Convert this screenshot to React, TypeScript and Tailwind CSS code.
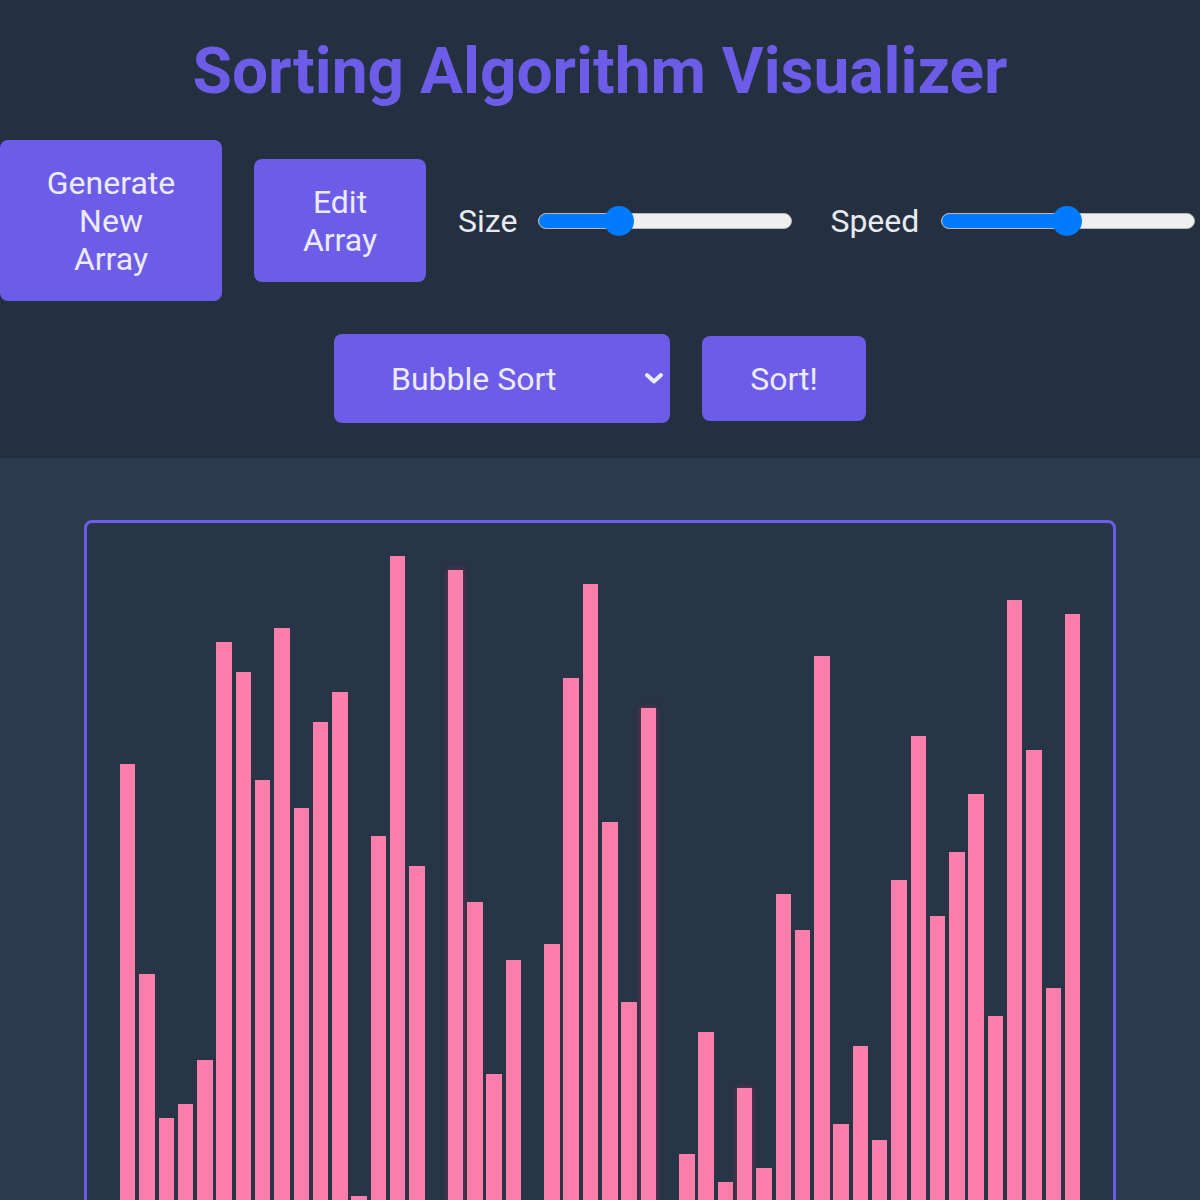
import React from "react";

const heights = [
  493, 283, 139, 153, 197, 615, 585, 477, 629, 449, 535, 565, 61, 421, 701, 391, 30, 687, 355, 183, 297, 25, 313, 579,
  673, 435, 255, 549, 35, 103, 225, 75, 169, 89, 363, 327, 601, 133, 211, 117, 377, 521, 341, 405, 463, 241, 657, 507,
  269, 643,
];
const glow = new Set([17, 27, 32]);

function Slider({ pos }: { pos: number }) {
  return (
    <div className="relative w-[254px] h-[30px] flex items-center">
      <div className="w-full h-[16px] rounded-full bg-[#efefef] border border-[#b8b8b8] overflow-hidden">
        <div className="h-full bg-[#007bff]" style={{ width: pos }} />
      </div>
      <div
        className="absolute top-0 w-[30px] h-[30px] rounded-full bg-[#007bff]"
        style={{ left: pos - 15 }}
      />
    </div>
  );
}

export default function App() {
  return (
    <div className="min-h-screen bg-[#2c3a4d]" style={{ fontFamily: "Roboto, 'Noto Sans', sans-serif" }}>
      <header className="bg-[#242f40] h-[458px] pt-[34px] flex flex-col items-center overflow-hidden">
        <h1 className="text-[64px] leading-[75px] font-bold text-[#6c5ce7]">Sorting Algorithm Visualizer</h1>
        <div className="mt-[31px] w-full flex items-center h-[161px] text-[32px] leading-[38px] text-[#ecebfc]">
          <button className="w-[222px] h-[161px] shrink-0 rounded-lg bg-[#6c5ce7] flex items-center justify-center text-center">
            Generate
            <br />
            New
            <br />
            Array
          </button>
          <button className="ml-[32px] w-[172px] h-[123px] shrink-0 rounded-lg bg-[#6c5ce7] flex items-center justify-center text-center">
            Edit
            <br />
            Array
          </button>
          <span className="ml-[32px] text-[#e8eaf0]">Size</span>
          <div className="ml-[21px]">
            <Slider pos={81} />
          </div>
          <span className="ml-[38px] text-[#e8eaf0]">Speed</span>
          <div className="ml-[22px]">
            <Slider pos={126} />
          </div>
        </div>
        <div className="mt-[33px] flex items-center gap-[32px] text-[32px] leading-[38px] text-[#ecebfc]">
          <div className="relative w-[336px] h-[89px] rounded-lg bg-[#6c5ce7] flex items-center pl-[57px]">
            <span>Bubble Sort</span>
            <svg
              className="absolute left-[310px] top-[37px]"
              width="20"
              height="16"
              viewBox="0 0 20 16"
              fill="none"
              stroke="#ecebfc"
              strokeWidth="4"
              strokeLinecap="round"
              strokeLinejoin="round"
            >
              <path d="M3 4 L10 10.5 L17 4" />
            </svg>
          </div>
          <button className="w-[164px] h-[85px] rounded-lg bg-[#6c5ce7] flex items-center justify-center">Sort!</button>
        </div>
      </header>
      <main className="flex justify-center pt-[62px]">
        <div className="w-[1032px] h-[740px] shrink-0 border-[3px] border-[#6c5ce7] rounded-lg bg-[#283546] flex items-end gap-[3.8px] px-[33px]">
          {heights.map((h, i) => (
            <div
              key={i}
              className={
                glow.has(i)
                  ? "flex-1 bg-[#fb82ad] shadow-[0_0_6px_rgba(170,40,90,0.6)]"
                  : "flex-1 bg-[#fd7eaa]"
              }
              style={{ height: h }}
            />
          ))}
        </div>
      </main>
    </div>
  );
}
